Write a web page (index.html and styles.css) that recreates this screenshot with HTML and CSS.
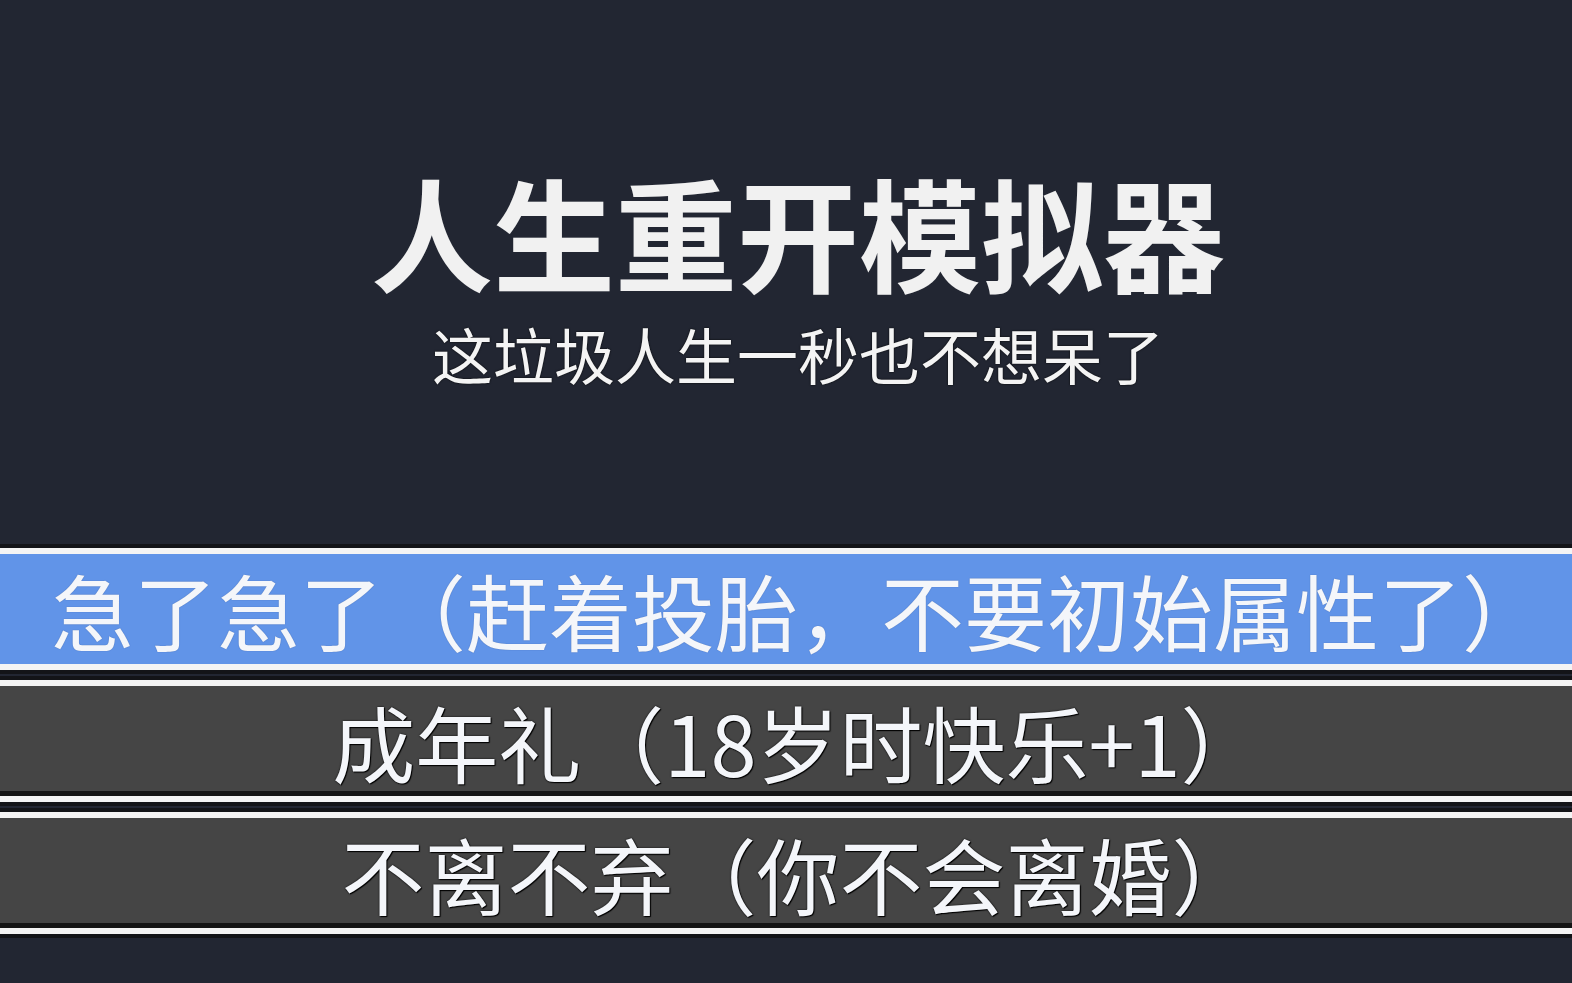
FILE: index.html
```html
<!DOCTYPE html>
<html lang="zh-CN">
<head>
<meta charset="utf-8">
<title>人生重开模拟器</title>
<link rel="stylesheet" href="styles.css">
</head>
<body>
<main class="screen">
  <header class="banner">
    <h1 class="title">人生重开模拟器</h1>
    <p class="tagline">这垃圾人生一秒也不想呆了</p>
  </header>
  <ul class="talents">
    <li class="talent talent-selected">急了急了（赶着投胎，不要初始属性了）</li>
    <li class="talent">成年礼（18岁时快乐+1）</li>
    <li class="talent">不离不弃（你不会离婚）</li>
  </ul>
</main>
</body>
</html>
```
FILE: styles.css
```css
html, body {
  margin: 0;
  padding: 0;
}

body {
  background: #222632;
  font-family: "Noto Sans CJK SC", "Noto Sans", sans-serif;
  color: #f2f2f2;
  width: 1572px;
  height: 983px;
  overflow: hidden;
}

.screen {
  display: flex;
  flex-direction: column;
}

.banner {
  display: flex;
  flex-direction: column;
  align-items: center;
  padding: 160px 0 0 24px;
}

.title {
  margin: 0;
  font-size: 122px;
  line-height: 140px;
  font-weight: 700;
  color: #f1f1f1;
}

.tagline {
  margin: 18px 0 0;
  font-size: 61px;
  line-height: 72px;
  font-weight: 400;
  color: #f4f4f4;
  text-shadow: 0 0 2px #000;
}

.talents {
  list-style: none;
  margin: 158px 0 0;
  padding: 0;
  display: flex;
  flex-direction: column;
  gap: 10px;
}

.talent {
  height: 110px;
  padding-left: 24px;
  line-height: 110px;
  text-align: center;
  font-size: 83px;
  white-space: nowrap;
  background: #454545;
  border-top: 6px solid #f4f4f4;
  border-bottom: 6px solid #f4f4f4;
  box-shadow: 0 0 0 4px #131418, inset 0 -5px 0 #151515;
  color: #f4f6fa;
  text-shadow: 0 0 2px #000, 1px 1px 1px #000;
}

.talent-selected {
  background: #6194e8;
  box-shadow: 0 0 0 4px #131418;
  text-shadow: 0 0 1px #3c5fa0;
}
```
